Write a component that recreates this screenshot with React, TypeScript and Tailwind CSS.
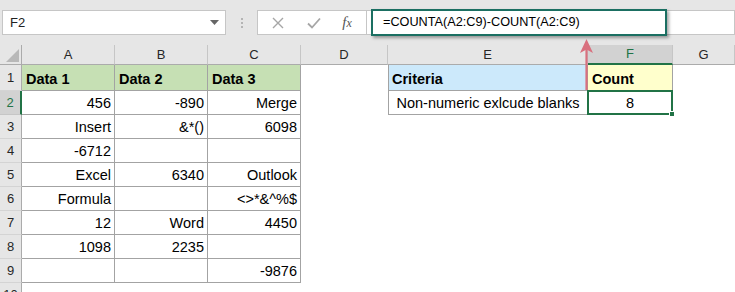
import React from "react";

const COLS = ["A", "B", "C", "D", "E", "F", "G"];

const data: string[][] = [
  ["456", "-890", "Merge"],
  ["Insert", "&*()", "6098"],
  ["-6712", "", ""],
  ["Excel", "6340", "Outlook"],
  ["Formula", "", "<>*&^%$"],
  ["12", "Word", "4450"],
  ["1098", "2235", ""],
  ["", "", "-9876"],
];

function ColHeader({ label, active }: { label: string; active?: boolean }) {
  return (
    <div
      className={
        active
          ? "flex items-center justify-center bg-[#d2d2d2] border-r border-[#c6c6c6] border-b-2 border-b-[#217346] text-[13px] text-[#217346]"
          : "flex items-center justify-center bg-[#e6e6e6] border-r border-[#c6c6c6] border-b border-b-[#ababab] text-[13px] text-[#262626]"
      }
    >
      {label}
    </div>
  );
}

function RowHeader({ n, active }: { n: number; active?: boolean }) {
  return (
    <div
      className={
        active
          ? "flex items-center justify-center bg-[#d2d2d2] border-r-2 border-[#217346] border-b border-b-[#c6c6c6] text-[13px] text-[#217346]"
          : "flex items-center justify-center bg-[#e6e6e6] border-r border-[#ababab] border-b border-b-[#d4d4d4] text-[13px] text-[#262626]"
      }
    >
      {n}
    </div>
  );
}

function DataCell({ v }: { v: string }) {
  return (
    <div className="flex items-end justify-end pr-[3px] pb-[2px] border-r border-b border-[#a3a3a3] text-[14.5px] leading-[18px] text-black whitespace-nowrap">
      {v}
    </div>
  );
}

function HeadCell({ v }: { v: string }) {
  return (
    <div className="flex items-end pl-[4px] pb-[2px] bg-[#c6e0b4] border-r border-b border-[#a3a3a3] text-[14.5px] leading-[18px] font-bold text-black whitespace-nowrap">
      {v}
    </div>
  );
}

function Empty() {
  return <div />;
}

export default function App() {
  return (
    <div className="relative w-[735px] h-[292px] overflow-hidden bg-white font-['Liberation_Sans',Arial,sans-serif]">
      {/* Toolbar */}
      <div className="flex items-start h-[45px] bg-[#e6e6e6] pt-[10px]">
        <div className="ml-[2px] w-[224px] h-[25px] bg-white border border-[#c6c6c6] flex items-center justify-between pl-[7px] pr-[6px]">
          <span className="text-[13px] text-[#222]">F2</span>
          <svg width="9" height="5" viewBox="0 0 9 5">
            <path d="M0 0 L9 0 L4.5 5 Z" fill="#666" />
          </svg>
        </div>
        <div className="w-[31px] h-[25px] flex flex-col items-center justify-center gap-[2px]">
          <div className="w-[2px] h-[2px] bg-[#b4b4b4]" />
          <div className="w-[2px] h-[2px] bg-[#b4b4b4]" />
          <div className="w-[2px] h-[2px] bg-[#b4b4b4]" />
        </div>
        <div className="w-[110px] h-[25px] bg-white border border-[#c6c6c6] flex items-center">
          <div className="w-[40px] flex justify-center">
            <svg width="12" height="12" viewBox="0 0 12 12">
              <path d="M1 1 L11 11 M11 1 L1 11" stroke="#a6a6a6" strokeWidth="1.4" fill="none" />
            </svg>
          </div>
          <div className="w-[32px] flex justify-center">
            <svg width="14" height="12" viewBox="0 0 14 12">
              <path d="M1 6.5 L5 10.5 L13 1.5" stroke="#a6a6a6" strokeWidth="1.8" fill="none" />
            </svg>
          </div>
          <div className="w-[34px] flex justify-center">
            <span className="font-['Liberation_Serif',serif] italic text-[15px] text-[#555] leading-none">
              f<span className="text-[12px]">x</span>
            </span>
          </div>
        </div>
        <div className="flex-1 h-[25px] bg-white border border-[#c6c6c6] border-l-0 flex items-center pl-[16px]">
          <span className="text-[12.7px] text-black whitespace-nowrap">=COUNTA(A2:C9)-COUNT(A2:C9)</span>
        </div>
      </div>

      {/* Sheet grid */}
      <div className="grid grid-cols-[22px_93px_93px_93px_87px_200px_85px_62px] grid-rows-[20px_26px_repeat(9,24px)]">
        {/* corner */}
        <div className="relative bg-[#e6e6e6] border-r border-[#ababab] border-b border-b-[#ababab]">
          <svg className="absolute right-[2px] bottom-[2px]" width="13" height="13" viewBox="0 0 13 13">
            <path d="M13 0 L13 13 L0 13 Z" fill="#b8b8b8" />
          </svg>
        </div>
        {COLS.map((c) => (
          <ColHeader key={c} label={c} active={c === "F"} />
        ))}

        {/* Row 1 */}
        <RowHeader n={1} />
        <HeadCell v="Data 1" />
        <HeadCell v="Data 2" />
        <HeadCell v="Data 3" />
        <Empty />
        <div className="flex items-end pl-[3px] pb-[2px] bg-[#cce9fb] border-l border-r border-b border-[#a3a3a3] text-[14.5px] leading-[18px] font-bold text-black">
          Criteria
        </div>
        <div className="flex items-end pl-[4px] pb-[2px] bg-[#ffffcc] border-r border-b border-[#a3a3a3] text-[14.5px] leading-[18px] font-bold text-black">
          Count
        </div>
        <Empty />

        {/* Rows 2-9 */}
        {data.map((row, i) => (
          <React.Fragment key={i}>
            <RowHeader n={i + 2} active={i === 0} />
            {row.map((v, j) => (
              <DataCell key={j} v={v} />
            ))}
            <Empty />
            {i === 0 ? (
              <>
                <div className="flex items-end justify-center pb-[2px] border-l border-r border-b border-[#a3a3a3] text-[14.5px] leading-[18px] text-black whitespace-nowrap">
                  Non-numeric exlcude blanks
                </div>
                <div className="relative flex items-end justify-center pb-[2px] border-r border-b border-[#a3a3a3] text-[14.5px] leading-[18px] text-black">
                  8
                  <div className="absolute -left-[1px] -top-[1px] -right-[1px] -bottom-[1px] border-2 border-[#217346]" />
                  <div className="absolute -right-[3px] -bottom-[3px] w-[6px] h-[6px] bg-[#217346] border border-white" />
                </div>
              </>
            ) : (
              <>
                <Empty />
                <Empty />
              </>
            )}
            <Empty />
          </React.Fragment>
        ))}

        {/* Row 10 */}
        <RowHeader n={10} />
      </div>

      {/* Formula highlight annotation */}
      <div className="absolute left-[371px] top-[9px] w-[296px] h-[27px] border-2 border-[#1b6f62] shadow-[2px_2px_3px_rgba(0,0,0,0.35)]" />

      {/* Red arrow */}
      <svg className="absolute left-[576px] top-[36px]" width="22" height="56" viewBox="0 0 22 56">
        <path d="M10.5 6 L10.5 54" stroke="#d9707e" strokeWidth="2.2" fill="none" />
        <path d="M10.5 3 L17 17 L10.5 13.5 L4 17 Z" fill="#d9707e" />
      </svg>
    </div>
  );
}
